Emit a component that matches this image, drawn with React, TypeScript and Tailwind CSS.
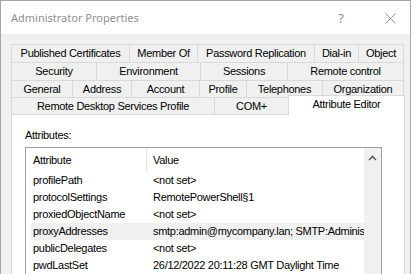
import React from "react";

type Tab = { label: string; w: string; last?: boolean };

const row1: Tab[] = [
  { label: "Published Certificates", w: "w-[118px]" },
  { label: "Member Of", w: "w-[68px]" },
  { label: "Password Replication", w: "w-[117px]" },
  { label: "Dial-in", w: "w-[44px]" },
  { label: "Object", w: "w-[46px]", last: true },
];
const row2: Tab[] = [
  { label: "Security", w: "w-[85px]" },
  { label: "Environment", w: "w-[104px]" },
  { label: "Sessions", w: "w-[87px]" },
  { label: "Remote control", w: "w-[117px]", last: true },
];
const row3: Tab[] = [
  { label: "General", w: "w-[61px]" },
  { label: "Address", w: "w-[59px]" },
  { label: "Account", w: "w-[68px]" },
  { label: "Profile", w: "w-[47px]" },
  { label: "Telephones", w: "w-[76px]" },
  { label: "Organization", w: "w-[82px]", last: true },
];

function TabRow({ tabs, h }: { tabs: Tab[]; h: string }) {
  return (
    <div className={`flex ${h}`}>
      {tabs.map((t) => (
        <div
          key={t.label}
          className={`${t.w} h-full flex items-center justify-center border-t border-l ${
            t.last ? "border-r" : ""
          } border-[#d9d9d9] bg-[#f0f0f0] whitespace-nowrap`}
        >
          {t.label}
        </div>
      ))}
    </div>
  );
}

const rows = [
  { a: "profilePath", v: "<not set>" },
  { a: "protocolSettings", v: "RemotePowerShell§1" },
  { a: "proxiedObjectName", v: "<not set>" },
  { a: "proxyAddresses", v: "smtp:admin@mycompany.lan; SMTP:Adminis", sel: true },
  { a: "publicDelegates", v: "<not set>" },
  { a: "pwdLastSet", v: "26/12/2022 20:11:28 GMT Daylight Time" },
];

export default function App() {
  return (
    <div className="w-[416px] h-[274px] bg-white overflow-hidden font-['Liberation_Sans',Arial,sans-serif] text-[11px] tracking-[-0.3px] text-black">
      <div className="w-[411px] h-[274px] border-l border-t border-r border-[#a6a6a6] bg-[#f0f0f0] flex flex-col">
        {/* Title bar */}
        <div className="h-[33px] bg-white flex items-center shrink-0 tracking-normal">
          <div className="pl-[10px] pt-[2px] font-['Noto_Sans',sans-serif] text-[11px] text-[#8f8f8f] flex-1">
            Administrator Properties
          </div>
          <div className="w-[46px] flex justify-center pt-[2px] font-['Noto_Sans',sans-serif] text-[13px] text-[#8f8f8f]">
            ?
          </div>
          <div className="w-[46px] flex justify-center pt-[2px] pl-[6px]">
            <svg width="11" height="11" viewBox="0 0 11 11">
              <path d="M0.5 0.5 L10.5 10.5 M10.5 0.5 L0.5 10.5" stroke="#8f8f8f" strokeWidth="1" />
            </svg>
          </div>
        </div>

        {/* Body */}
        <div className="pl-[10px] pt-[10px] flex flex-col flex-1">
          <TabRow tabs={row1} h="h-[18px]" />
          <TabRow tabs={row2} h="h-[18px]" />
          <TabRow tabs={row3} h="h-[17px]" />
          <div className="flex h-[17px] items-end">
            <div className="w-[203px] h-full flex items-center justify-center border-t border-l border-[#d9d9d9] bg-[#f0f0f0] whitespace-nowrap">
              Remote Desktop Services Profile
            </div>
            <div className="w-[74px] h-full flex items-center justify-center border-t border-l border-[#d9d9d9] bg-[#f0f0f0]">
              COM+
            </div>
            <div className="relative top-[1px] z-10 w-[117px] h-[20px] shrink-0 flex items-center justify-center pb-[2px] border-t border-l border-r border-[#d9d9d9] bg-white whitespace-nowrap">
              Attribute Editor
            </div>
          </div>

          {/* Panel */}
          <div className="w-[394px] flex-1 border border-[#d9d9d9] bg-white pl-[13px] pt-[14px] flex flex-col">
            <div className="h-[13px] leading-[13px]">Attributes:</div>
            <div className="mt-[5px] w-[357px] flex-1 border border-[#a0a0a0] flex">
              <div className="w-[338px] flex flex-col">
                <div className="h-[24px] flex items-stretch">
                  <div className="w-[120px] flex items-center pl-[7px]">Attribute</div>
                  <div className="w-px bg-[#e5e5e5]" />
                  <div className="flex-1 flex items-center pl-[6px]">Value</div>
                </div>
                <div className="flex flex-col pl-[5px]">
                  {rows.map((r) => (
                    <div
                      key={r.a}
                      className={`h-[17px] flex items-center whitespace-nowrap overflow-hidden ${
                        r.sel ? "bg-[#f0f0f0]" : ""
                      }`}
                    >
                      <div className="w-[122px] shrink-0 pl-[2px]">{r.a}</div>
                      <div className="shrink-0">{r.v}</div>
                    </div>
                  ))}
                </div>
              </div>
              <div className="w-[17px] bg-[#f0f0f0] flex justify-center pt-[7px]">
                <svg width="9" height="6" viewBox="0 0 9 6">
                  <path d="M1 5 L4.5 1.5 L8 5" fill="none" stroke="#606060" strokeWidth="1.6" />
                </svg>
              </div>
            </div>
          </div>
        </div>
      </div>
    </div>
  );
}
